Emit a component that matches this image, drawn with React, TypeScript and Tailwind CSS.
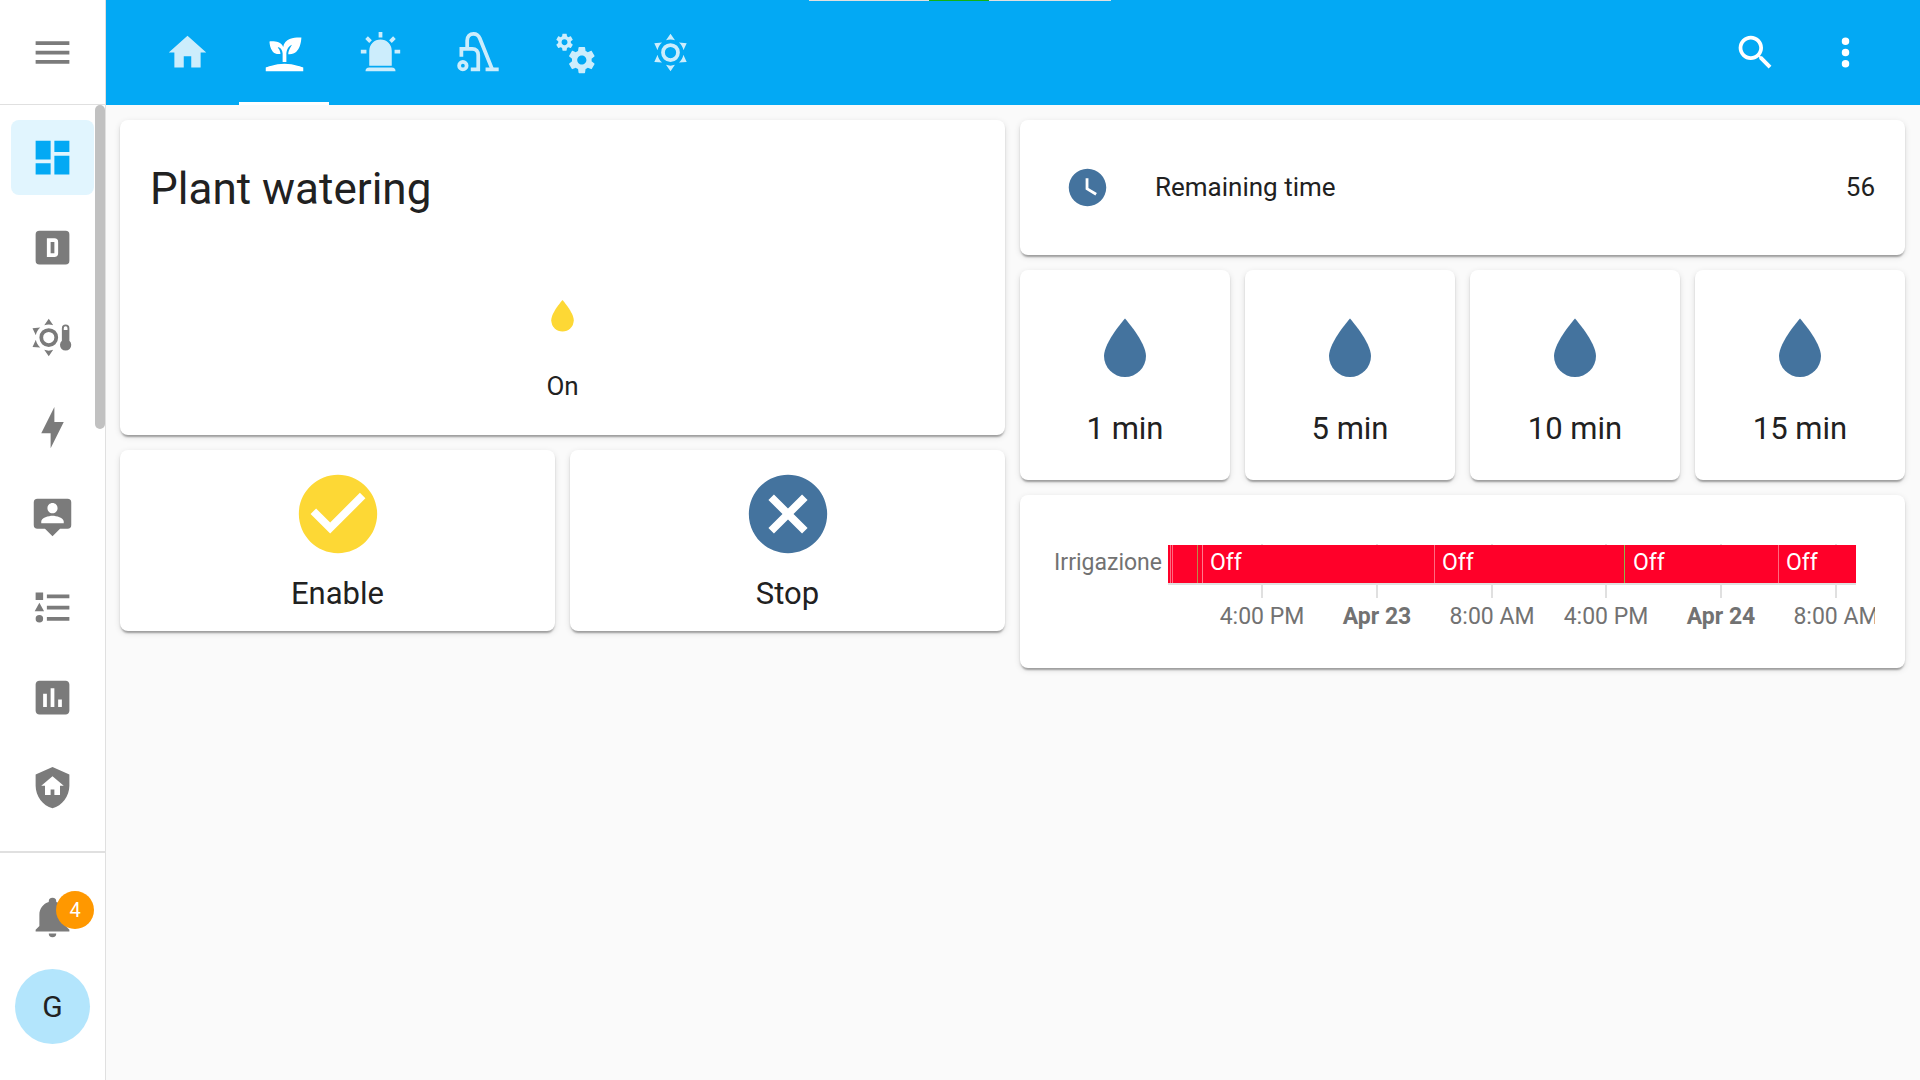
import { useState } from 'react'
import type { ReactNode } from 'react'

const ICONS = {
  menu: 'M3,6H21V8H3V6M3,11H21V13H3V11M3,16H21V18H3V16Z',
  home: 'M10,20V14H14V20H19V12H22L12,3L2,12H5V20H10Z',
  sprout:
    'M2,22V20C2,20 7,18 12,18C17,18 22,20 22,20V22H2M11.3,9.1C10.1,5.2 4,6.1 4,6.1C4,6.1 4.2,13.9 9.9,12.7C9.5,9.8 8,9 8,9C10.8,9 11,12.4 11,12.4V17C11.3,17 11.7,17 12,17C12.3,17 12.7,17 13,17V12.8C13,12.8 13,8.9 16,7.9C16,7.9 14,10.9 14,12.9C21,13.6 21,4 21,4C21,4 12.1,3 11.3,9.1Z',
  alarm:
    'M6,6.9L3.87,4.78L5.28,3.37L7.4,5.5L6,6.9M13,1V4H11V1H13M20.13,4.78L18,6.9L16.6,5.5L18.72,3.37L20.13,4.78M4.5,10.5V12.5H1.5V10.5H4.5M19.5,10.5H22.5V12.5H19.5V10.5M6,20H18A2,2 0 0,1 20,22H4A2,2 0 0,1 6,20M12,5A6,6 0 0,1 18,11V19H6V11A6,6 0 0,1 12,5Z',
  cogs: 'M15.9,18.45C17.25,18.45 18.35,17.35 18.35,16C18.35,14.65 17.25,13.55 15.9,13.55C14.54,13.55 13.45,14.65 13.45,16C13.45,17.35 14.54,18.45 15.9,18.45M21.1,16.68L22.58,17.84C22.71,17.95 22.75,18.13 22.66,18.29L21.26,20.71C21.17,20.86 21,20.92 20.83,20.86L19.09,20.16C18.73,20.44 18.33,20.67 17.91,20.85L17.64,22.7C17.62,22.87 17.47,23 17.3,23H14.5C14.32,23 14.18,22.87 14.15,22.7L13.89,20.85C13.46,20.67 13.07,20.44 12.71,20.16L10.96,20.86C10.81,20.92 10.62,20.86 10.54,20.71L9.14,18.29C9.05,18.13 9.09,17.95 9.22,17.84L10.7,16.68L10.65,16L10.7,15.31L9.22,14.16C9.09,14.05 9.05,13.86 9.14,13.71L10.54,11.29C10.62,11.13 10.81,11.07 10.96,11.13L12.71,11.84C13.07,11.56 13.46,11.32 13.89,11.15L14.15,9.29C14.18,9.13 14.32,9 14.5,9H17.3C17.47,9 17.62,9.13 17.64,9.29L17.91,11.15C18.33,11.32 18.73,11.56 19.09,11.84L20.83,11.13C21,11.07 21.17,11.13 21.26,11.29L22.66,13.71C22.75,13.86 22.71,14.05 22.58,14.16L21.1,15.31L21.15,16L21.1,16.68M6.69,8.07C7.56,8.07 8.26,7.37 8.26,6.5C8.26,5.63 7.56,4.92 6.69,4.92A1.58,1.58 0 0,0 5.11,6.5C5.11,7.37 5.82,8.07 6.69,8.07M10.03,6.94L11,7.68C11.07,7.75 11.09,7.87 11.03,7.97L10.13,9.53C10.08,9.63 9.96,9.67 9.86,9.63L8.74,9.18L8,9.62L7.81,10.81C7.79,10.92 7.7,11 7.59,11H5.79C5.67,11 5.58,10.92 5.56,10.81L5.4,9.62L4.64,9.18L3.52,9.63C3.41,9.67 3.3,9.63 3.24,9.53L2.34,7.97C2.28,7.87 2.31,7.75 2.39,7.68L3.34,6.94L3.31,6.5L3.34,6.06L2.39,5.32C2.31,5.25 2.28,5.13 2.34,5.03L3.24,3.47C3.3,3.37 3.41,3.33 3.52,3.37L4.63,3.82L5.4,3.38L5.56,2.19C5.58,2.08 5.67,2 5.79,2H7.59C7.7,2 7.79,2.08 7.81,2.19L8,3.38L8.74,3.82L9.86,3.37C9.96,3.33 10.08,3.37 10.13,3.47L11.03,5.03C11.09,5.13 11.07,5.25 11,5.32L10.03,6.06L10.06,6.5L10.03,6.94Z',
  sunny:
    'M12,7A5,5 0 0,1 17,12A5,5 0 0,1 12,17A5,5 0 0,1 7,12A5,5 0 0,1 12,7M12,9A3,3 0 0,0 9,12A3,3 0 0,0 12,15A3,3 0 0,0 15,12A3,3 0 0,0 12,9M12,2L14.39,5.42C13.65,5.15 12.84,5 12,5C11.16,5 10.35,5.15 9.61,5.42L12,2M3.34,7L7.5,6.65C6.9,7.16 6.36,7.78 5.94,8.5C5.5,9.24 5.25,10 5.11,10.79L3.34,7M3.36,17L5.12,13.23C5.26,14 5.53,14.78 5.95,15.5C6.37,16.24 6.91,16.86 7.5,17.37L3.36,17M20.65,7L18.88,10.79C18.74,10 18.47,9.23 18.05,8.5C17.63,7.78 17.1,7.15 16.5,6.64L20.65,7M20.64,17L16.5,17.36C17.09,16.85 17.62,16.22 18.04,15.5C18.46,14.77 18.73,14 18.87,13.21L20.64,17M12,22L9.59,18.56C10.33,18.83 11.14,19 12,19C12.82,19 13.63,18.83 14.37,18.56L12,22Z',
  magnify:
    'M9.5,3A6.5,6.5 0 0,1 16,9.5C16,11.11 15.41,12.59 14.44,13.73L14.71,14H15.5L20.5,19L19,20.5L14,15.5V14.71L13.73,14.44C12.59,15.41 11.11,16 9.5,16A6.5,6.5 0 0,1 3,9.5A6.5,6.5 0 0,1 9.5,3M9.5,5C7,5 5,7 5,9.5C5,12 7,14 9.5,14C12,14 14,12 14,9.5C14,7 12,5 9.5,5Z',
  dots: 'M12,16A2,2 0 0,1 14,18A2,2 0 0,1 12,20A2,2 0 0,1 10,18A2,2 0 0,1 12,16M12,10A2,2 0 0,1 14,12A2,2 0 0,1 12,14A2,2 0 0,1 10,12A2,2 0 0,1 12,10M12,4A2,2 0 0,1 14,6A2,2 0 0,1 12,8A2,2 0 0,1 10,6A2,2 0 0,1 12,4Z',
  dashboard: 'M13,3V9H21V3M13,21H21V11H13M3,21H11V15H3M3,13H11V3H3V13Z',
  alphaD:
    'M9,7V17H13A2,2 0 0,0 15,15V9A2,2 0 0,0 13,7H9M11,9H13V15H11V9M5,3H19A2,2 0 0,1 21,5V19A2,2 0 0,1 19,21H5A2,2 0 0,1 3,19V5A2,2 0 0,1 5,3Z',
  sunThermometer:
    'M10,7A5,5 0 0,1 15,12A5,5 0 0,1 10,17A5,5 0 0,1 5,12A5,5 0 0,1 10,7M10,9A3,3 0 0,0 7,12A3,3 0 0,0 10,15A3,3 0 0,0 13,12A3,3 0 0,0 10,9M10,2L12.39,5.42C11.65,5.15 10.84,5 10,5C9.16,5 8.35,5.15 7.61,5.42L10,2M1.34,7L5.5,6.65C4.9,7.16 4.36,7.78 3.94,8.5C3.5,9.24 3.25,10 3.11,10.79L1.34,7M1.36,17L3.12,13.23C3.26,14 3.53,14.78 3.95,15.5C4.37,16.24 4.91,16.86 5.5,17.37L1.36,17M10,22L7.59,18.56C8.33,18.83 9.14,19 10,19C10.82,19 11.63,18.83 12.37,18.56L10,22M19,5A2,2 0 0,0 17,7V13.76A3,3 0 1,0 21,13.76V7A2,2 0 0,0 19,5M19,6A1,1 0 0,1 20,7V8H18V7A1,1 0 0,1 19,6Z',
  bolt: 'M11 15H6L13 1V9H18L11 23V15Z',
  person:
    'M20,2H4A2,2 0 0,0 2,4V16A2,2 0 0,0 4,18H8L12,22L16,18H20A2,2 0 0,0 22,16V4A2,2 0 0,0 20,2M12,4.3C13.5,4.3 14.7,5.5 14.7,7C14.7,8.5 13.5,9.7 12,9.7C10.5,9.7 9.3,8.5 9.3,7C9.3,5.5 10.5,4.3 12,4.3M18,15H6V14.1C6,12.1 10,11 12,11C14,11 18,12.1 18,14.1V15Z',
  logbook:
    'M5,9.5L7.5,14H2.5L5,9.5M3,4H7V8H3V4M5,20A2,2 0 0,0 7,18A2,2 0 0,0 5,16A2,2 0 0,0 3,18A2,2 0 0,0 5,20M9,5V7H21V5H9M9,19H21V17H9V19M9,13H21V11H9V13Z',
  chart:
    'M9 17H7V10H9V17M13 17H11V7H13V17M17 17H15V13H17V17M19 3H5C3.89 3 3 3.89 3 5V19C3 20.1 3.9 21 5 21H19C20.1 21 21 20.1 21 19V5C21 3.89 20.1 3 19 3Z',
  shield:
    'M11,13H13V16H16V11H18L12,6L6,11H8V16H11V13M12,1L21,5V11C21,16.55 17.16,21.74 12,23C6.84,21.74 3,16.55 3,11V5L12,1Z',
  bell: 'M21,19V20H3V19L5,17V11C5,7.9 7.03,5.17 10,4.29C10,4.19 10,4.1 10,4A2,2 0 0,1 12,2A2,2 0 0,1 14,4C14,4.1 14,4.19 14,4.29C16.97,5.17 19,7.9 19,11V17L21,19M14,21A2,2 0 0,1 12,23A2,2 0 0,1 10,21',
  water: 'M12,20A6,6 0 0,1 6,14C6,10 12,3.25 12,3.25C12,3.25 18,10 18,14A6,6 0 0,1 12,20Z',
  check:
    'M12 2C6.5 2 2 6.5 2 12S6.5 22 12 22 22 17.5 22 12 17.5 2 12 2M10 17L5 12L6.41 10.59L10 14.17L17.59 6.58L19 8L10 17Z',
  close:
    'M12,2C17.53,2 22,6.47 22,12C22,17.53 17.53,22 12,22C6.47,22 2,17.53 2,12C2,6.47 6.47,2 12,2M15.59,7L12,10.59L8.41,7L7,8.41L10.59,12L7,15.59L8.41,17L12,13.41L15.59,17L17,15.59L13.41,12L17,8.41L15.59,7Z',
  clock:
    'M12 2C6.5 2 2 6.5 2 12C2 17.5 6.5 22 12 22C17.5 22 22 17.5 22 12S17.5 2 12 2M16.2 16.2L11 13V7H12.5V12.2L17 14.9L16.2 16.2Z',
}

type IconName = keyof typeof ICONS

function Icon({ name, className = 'size-[45px]' }: { name: IconName; className?: string }) {
  return (
    <svg viewBox="0 0 24 24" fill="currentColor" fillRule="evenodd" aria-hidden="true" className={className}>
      <path d={ICONS[name]} />
    </svg>
  )
}

// Stroked rather than filled: hose, body and a wheel
function VacuumIcon() {
  return (
    <svg viewBox="0 0 24 24" fill="none" stroke="currentColor" strokeWidth="2" aria-hidden="true" className="size-[45px]">
      <path d="M6.5 9.5V5.6C6.5 3.5 8 2 9.9 2c1.5 0 2.7.9 3.3 2.4L19.7 20.6" />
      <path d="M3.4 14.2V10h5.8c2 0 3.2 1.5 3.2 3.4V21H8.4" />
      <path d="M16.3 21H23.3" />
      <circle cx="4.2" cy="19" r="2" />
    </svg>
  )
}

const TABS: { label: string; icon: IconName | 'vacuum' }[] = [
  { label: 'Home', icon: 'home' },
  { label: 'Plants', icon: 'sprout' },
  { label: 'Alarm', icon: 'alarm' },
  { label: 'Vacuum', icon: 'vacuum' },
  { label: 'System', icon: 'cogs' },
  { label: 'Weather', icon: 'sunny' },
]

const NAV: { label: string; icon: IconName }[] = [
  { label: 'Overview', icon: 'dashboard' },
  { label: 'Dwains', icon: 'alphaD' },
  { label: 'Climate', icon: 'sunThermometer' },
  { label: 'Energy', icon: 'bolt' },
  { label: 'Map', icon: 'person' },
  { label: 'Logbook', icon: 'logbook' },
  { label: 'History', icon: 'chart' },
  { label: 'Security', icon: 'shield' },
]

const CARD =
  'rounded-lg bg-white shadow-[0_4px_2px_-2px_rgba(0,0,0,0.2),0_2px_2px_0_rgba(0,0,0,0.14),0_2px_6px_0_rgba(0,0,0,0.12)]'

function Card({ className = '', children }: { className?: string; children: ReactNode }) {
  return <section className={`${CARD} ${className}`}>{children}</section>
}

function Sidebar() {
  return (
    <aside className="sticky top-0 flex h-screen w-[106px] shrink-0 flex-col border-r border-[#e0e0e0] bg-white text-[#7b7b7b]">
      <div className="flex h-[105px] shrink-0 items-center justify-center border-b border-[#e0e0e0]">
        <button type="button" aria-label="Toggle sidebar">
          <Icon name="menu" />
        </button>
      </div>
      <nav className="relative flex min-h-0 flex-1 flex-col gap-[15px] overflow-hidden px-[11px] pt-[15px]">
        {NAV.map((item, i) => (
          <a
            key={item.label}
            href={`#${item.label.toLowerCase()}`}
            aria-label={item.label}
            className={`flex h-[75px] shrink-0 items-center justify-center rounded-lg ${
              i === 0 ? 'bg-[#e1f5fe] text-[#03a9f4]' : ''
            }`}
          >
            <Icon name={item.icon} />
          </a>
        ))}
        <span className="absolute top-0 right-0 h-[324px] w-2.5 rounded-full bg-[#c1c1c1]" />
      </nav>
      <div className="flex shrink-0 flex-col items-center gap-[15px] border-t-2 border-[#e0e0e0] pt-[26px] pb-9">
        <button type="button" aria-label="Notifications" className="relative flex h-[75px] w-[83px] items-center justify-center">
          <Icon name="bell" />
          <span className="absolute top-3 right-0 flex size-[38px] items-center justify-center rounded-full bg-[#ff9800] text-xl text-white">
            4
          </span>
        </button>
        <a
          href="#profile"
          className="flex size-[75px] items-center justify-center rounded-full bg-[#b3e5fc] text-3xl text-[#212121]"
        >
          G
        </a>
      </div>
    </aside>
  )
}

function Header() {
  const [tab, setTab] = useState(1)
  return (
    <header className="flex h-[105px] items-center justify-between bg-[#03a9f4] pr-[30px] pl-[33px] text-white">
      <div role="tablist" className="flex h-full w-[580px]">
        {TABS.map((t, i) => (
          <button
            key={t.label}
            type="button"
            role="tab"
            aria-label={t.label}
            aria-selected={i === tab}
            onClick={() => setTab(i)}
            className="relative flex flex-1 items-center justify-center"
          >
            <span className={i === tab ? '' : 'opacity-80'}>
              {t.icon === 'vacuum' ? <VacuumIcon /> : <Icon name={t.icon} />}
            </span>
            {i === tab && <span className="absolute inset-x-[3px] bottom-0 h-[3px] bg-white" />}
          </button>
        ))}
      </div>
      <div className="flex">
        <button type="button" aria-label="Search" className="flex size-[90px] items-center justify-center">
          <Icon name="magnify" />
        </button>
        <button type="button" aria-label="Menu" className="flex size-[90px] items-center justify-center">
          <Icon name="dots" />
        </button>
      </div>
    </header>
  )
}

function ActionCard({ label, icon, color }: { label: string; icon: IconName; color: string }) {
  return (
    <button type="button" className={`${CARD} flex flex-col items-center gap-[15px] pt-[17px] pb-[19px]`}>
      <Icon name={icon} className={`size-[94px] ${color}`} />
      <span className="text-[31px] leading-9">{label}</span>
    </button>
  )
}

// All positions are in px on a 707px wide plot, turned into percentages when drawn
const PLOT = 707
const pct = (x: number) => `${(x / PLOT) * 100}%`

const SWITCHES = [
  { x: 2, color: '#ff6a80' },
  { x: 4, color: '#ff6a80' },
  { x: 29, color: '#b98a4a' },
  { x: 34, color: '#ff7a8c' },
  { x: 266, color: '#ff6a80' },
  { x: 456, color: '#8bb84a' },
  { x: 610, color: '#ff6a80' },
]
const STATES = [42, 274, 465, 618]
const TICKS = [
  { x: 94, label: '4:00 PM' },
  { x: 209, label: 'Apr 23', bold: true },
  { x: 324, label: '8:00 AM' },
  { x: 438, label: '4:00 PM' },
  { x: 553, label: 'Apr 24', bold: true },
  { x: 668, label: '8:00 AM' },
]

function HistoryCard() {
  return (
    <Card className="flex px-[30px] pt-[49px] pb-[30px] text-[#727272]">
      <span className="w-[118px] shrink-0 pr-1.5 text-right text-[23px] leading-[38px]">Irrigazione</span>
      <svg className="h-[94px] min-w-0 flex-1 overflow-hidden text-[23px]" role="img" aria-label="Irrigazione history">
        {TICKS.map((t) => (
          <rect key={t.x} x={pct(t.x - 1)} y="0" width="2" height="54" fill="#e0e0e0" />
        ))}
        <rect x="0" y="1" width={pct(688)} height="38" fill="#ff0029" />
        <rect x="0" y="39" width={pct(688)} height="2" fill="#e0e0e0" />
        {SWITCHES.map((s) => (
          <rect key={s.x} x={pct(s.x)} y="1" width="1" height="38" fill={s.color} />
        ))}
        {STATES.map((x) => (
          <text key={x} x={pct(x)} y="26" fill="#fff">
            Off
          </text>
        ))}
        {TICKS.map((t) => (
          <text key={t.x} x={pct(t.x)} y="80" textAnchor="middle" fill="currentColor" fontWeight={t.bold ? 700 : 400}>
            {t.label}
          </text>
        ))}
      </svg>
    </Card>
  )
}

export default function App() {
  return (
    <div className="flex min-h-screen bg-[#fafafa] font-[Roboto,sans-serif] text-[#212121]">
      <div className="fixed top-0 left-1/2 z-10 flex h-px w-[302px] -translate-x-1/2 bg-[#e0e0e0] pl-[120px]">
        <span className="w-[60px] bg-[#12b312]" />
      </div>
      <Sidebar />
      <div className="min-w-0 flex-1">
        <Header />
        <main className="grid grid-cols-2 items-start gap-[15px] pt-[15px] pr-[15px] pb-[15px] pl-3.5">
          <div className="flex flex-col gap-[15px]">
            <Card className="px-[30px] pt-[39px] pb-[31px]">
              <h1 className="text-[44px] leading-[60px]">Plant watering</h1>
              <div className="mt-[75px] flex flex-col items-center gap-[29px]">
                <Icon name="water" className="size-[45px] text-[#fdd835]" />
                <span className="text-[26px] leading-9">On</span>
              </div>
            </Card>
            <div className="grid grid-cols-2 gap-[15px]">
              <ActionCard label="Enable" icon="check" color="text-[#fdd835]" />
              <ActionCard label="Stop" icon="close" color="text-[#44739e]" />
            </div>
          </div>
          <div className="flex flex-col gap-[15px]">
            <Card className="flex items-center py-[45px] pr-[30px] pl-[45px] text-[26px] leading-[45px]">
              <Icon name="clock" className="size-[45px] text-[#44739e]" />
              <span className="ml-[45px] flex-1">Remaining time</span>
              <span>56</span>
            </Card>
            <div className="grid grid-cols-4 gap-[15px]">
              {[1, 5, 10, 15].map((m) => (
                <button
                  key={m}
                  type="button"
                  className={`${CARD} flex aspect-square flex-col items-center gap-5 pt-[37px]`}
                >
                  <Icon name="water" className="size-[84px] text-[#44739e]" />
                  <span className="text-[31px] leading-9">{m} min</span>
                </button>
              ))}
            </div>
            <HistoryCard />
          </div>
        </main>
      </div>
    </div>
  )
}
